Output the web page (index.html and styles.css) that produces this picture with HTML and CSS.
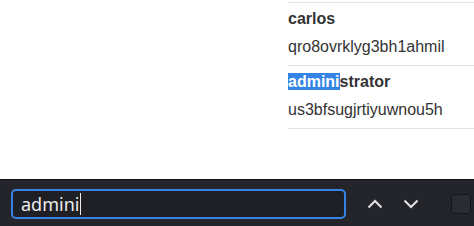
FILE: index.html
```html
<!DOCTYPE html>
<html lang="en">
<head>
  <meta charset="UTF-8">
  <title>Users</title>
  <link rel="stylesheet" href="styles.css">
</head>
<body>
  <div class="page">
    <div class="users">
      <div class="user">
        <div class="user-name">carlos</div>
        <div class="user-pass">qro8ovrklyg3bh1ahmil</div>
      </div>
      <div class="user">
        <div class="user-name"><span class="match">admini</span>strator</div>
        <div class="user-pass">us3bfsugjrtiyuwnou5h</div>
      </div>
    </div>
  </div>

  <div class="findbar">
    <div class="find-input"><span class="find-text">admini</span><span class="caret"></span></div>
    <button class="find-btn" aria-label="Previous">
      <svg width="16" height="10" viewBox="0 0 16 10"><path d="M1.5 8.5 L8 2 L14.5 8.5" fill="none" stroke="#e2e2e4" stroke-width="2"/></svg>
    </button>
    <button class="find-btn" aria-label="Next">
      <svg width="16" height="10" viewBox="0 0 16 10"><path d="M1.5 1.5 L8 8 L14.5 1.5" fill="none" stroke="#e2e2e4" stroke-width="2"/></svg>
    </button>
    <div class="find-check"></div>
  </div>
</body>
</html>
```

FILE: styles.css
```css
html, body {
  margin: 0;
  height: 100%;
}

body {
  display: flex;
  flex-direction: column;
  background: #fff;
  font-family: "Liberation Sans", Arial, sans-serif;
  color: #333;
  overflow: hidden;
}

.page {
  flex: 1;
  padding-top: 2px;
}

.users {
  margin-left: 288px;
}

.user {
  border-top: 1px solid #e2e2e2;
  padding: 2px 0 4px;
}

.user:last-child {
  border-bottom: 1px solid #e2e2e2;
}

.user-name,
.user-pass {
  font-size: 16px;
  line-height: 28px;
}

.user-name {
  font-weight: bold;
}

.match {
  background: #3584e4;
  color: #fff;
}

.findbar {
  height: 46px;
  border-top: 1px solid #111214;
  background: #24252b;
  display: flex;
  align-items: center;
  padding-left: 11px;
}

.find-input {
  width: 323px;
  height: 26px;
  border: 2px solid #3584e4;
  border-radius: 5px;
  background: #1f2026;
  display: flex;
  align-items: center;
  padding-left: 8px;
  box-sizing: content-box;
  margin-top: 2px;
}

.find-text {
  font-family: "Noto Sans", sans-serif;
  font-size: 18px;
  color: #ececee;
}

.caret {
  width: 1px;
  height: 22px;
  background: #ececee;
  margin-left: 1px;
}

.find-btn {
  width: 36px;
  height: 30px;
  margin-top: 2px;
  border: 0;
  padding: 0;
  background: none;
  display: flex;
  align-items: center;
  justify-content: center;
}

.find-btn:first-of-type {
  margin-left: 11px;
}

.find-check {
  width: 18px;
  height: 18px;
  margin-left: 22px;
  margin-top: 2px;
  border: 1px solid #15161a;
  border-radius: 3px;
  background: #2b2c33;
}
```
